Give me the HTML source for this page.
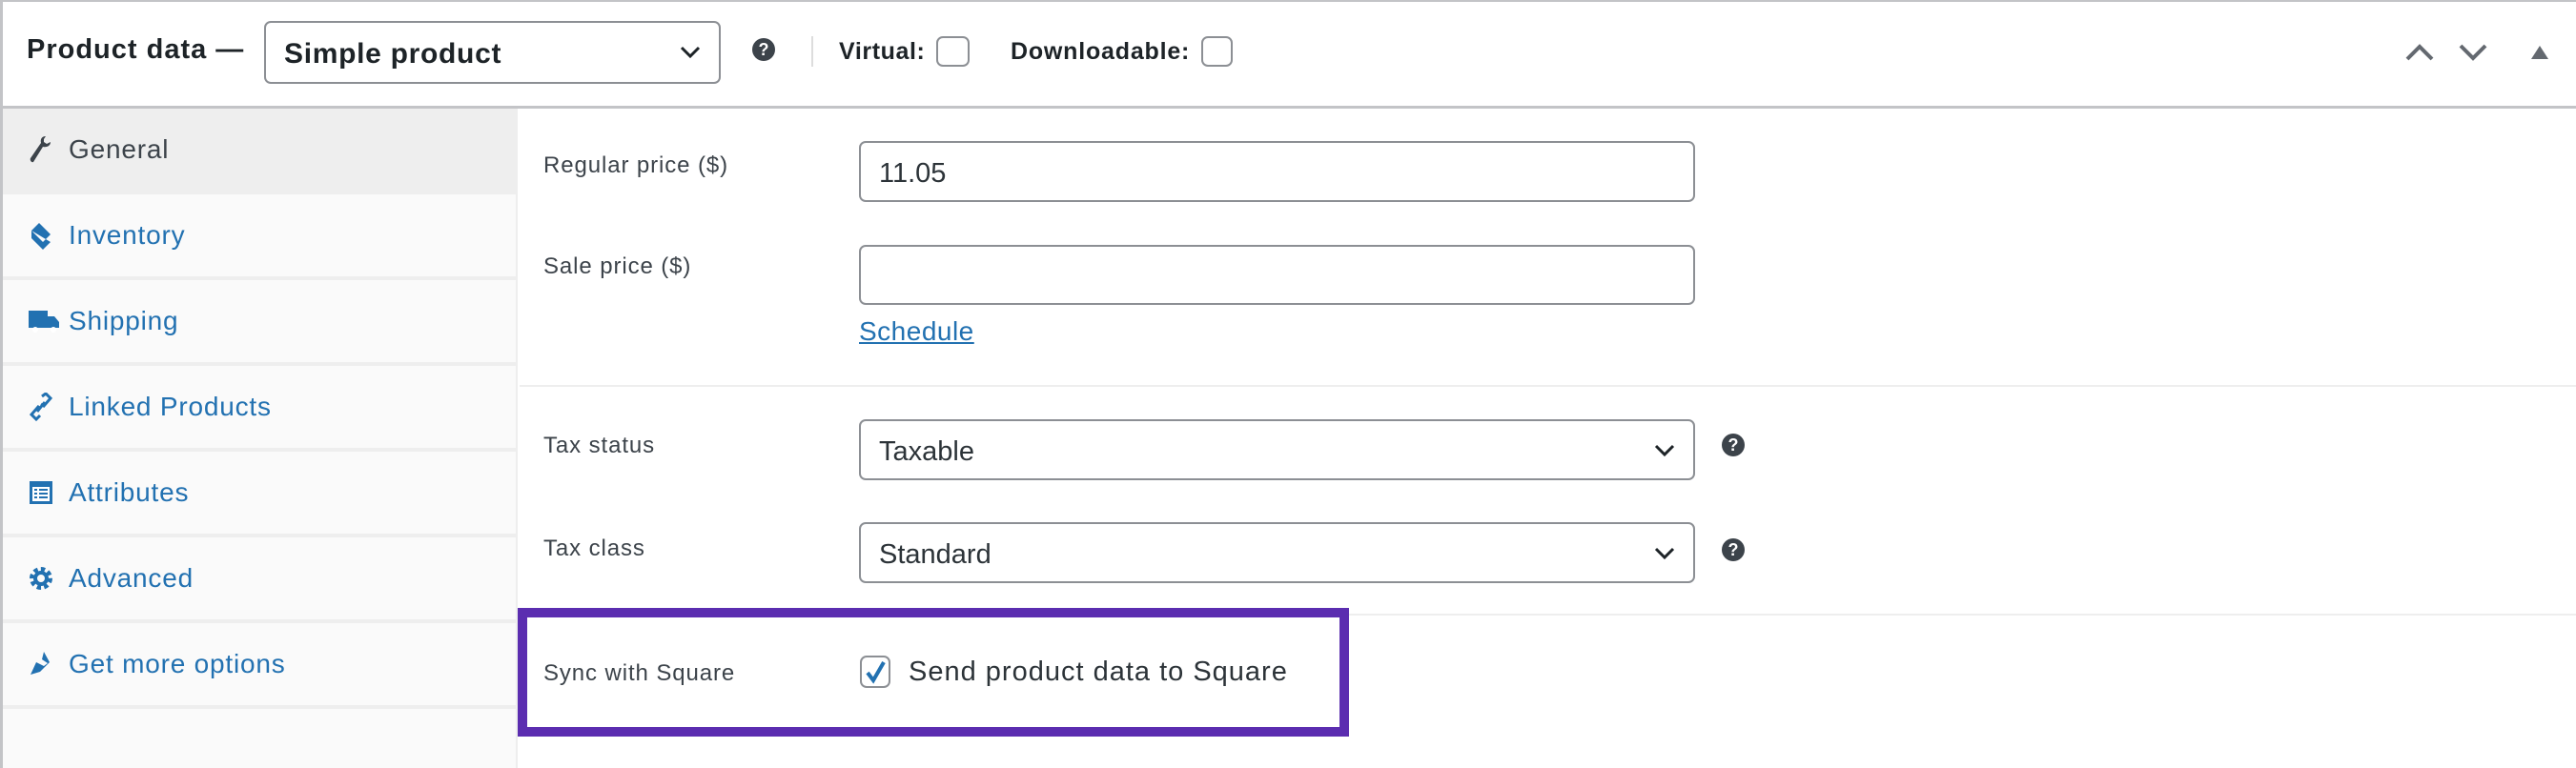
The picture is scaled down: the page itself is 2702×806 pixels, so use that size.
<!DOCTYPE html>
<html><head><meta charset="utf-8"><style>
*{box-sizing:border-box;margin:0;padding:0}
body{width:2702px;height:806px;background:#fff;font-family:"Liberation Sans",sans-serif;position:relative;overflow:hidden;color:#1d2327}
.a{position:absolute}
.hdr{left:0;top:0;width:2702px;height:114px;border-top:2px solid #c3c4c7;border-left:3px solid #c3c4c7;border-bottom:3px solid #c3c4c7}
.side{left:0;top:114px;width:543px;height:692px;background:#fafafa;border-left:3px solid #c3c4c7;border-right:2px solid #eee}
.item{position:absolute;left:3px;width:538px;height:90px;border-bottom:4px solid #eee;font-size:28px;letter-spacing:0.8px;color:#2271b1}
.item span{position:absolute;left:69px;top:27px}
.item svg{position:absolute;left:27px;top:28px}
.lbl{font-size:24px;letter-spacing:0.9px;color:#3c434a}
.inp{border:2px solid #8c8f94;border-radius:7px;background:#fff;font-size:29px;color:#2c3338}
.sep{left:545px;width:2157px;height:2px;background:#eee}
.help{width:24px;height:24px;border-radius:50%;background:#3c434a;color:#fff;font-size:18px;font-weight:bold;text-align:center;line-height:24px}
.cb{border:2px solid #8c8f94;border-radius:7px;background:#fff}
</style></head><body>
<div class="a hdr"></div>
<div class="a" style="left:28px;top:36px;font-size:29px;letter-spacing:1px;font-weight:bold">Product data —</div>
<div class="a inp" style="left:277px;top:22px;width:479px;height:66px;font-weight:bold;font-size:30px;letter-spacing:0.7px;color:#1d2327"><span class="a" style="left:19px;top:16px">Simple product</span>
<svg class="a" style="left:434px;top:24px" width="22" height="14" viewBox="0 0 22 14"><path d="M2 2l9 9 9-9" fill="none" stroke="#1d2327" stroke-width="3"/></svg></div>
<div class="a help" style="left:789px;top:40px">?</div>
<div class="a" style="left:851px;top:38px;width:2px;height:32px;background:#ddd"></div>
<div class="a" style="left:880px;top:40px;font-size:25px;letter-spacing:0.6px;font-weight:bold">Virtual:</div>
<div class="a cb" style="left:982px;top:38px;width:35px;height:32px"></div>
<div class="a" style="left:1060px;top:40px;font-size:25px;letter-spacing:0.8px;font-weight:bold">Downloadable:</div>
<div class="a cb" style="left:1260px;top:38px;width:33px;height:32px"></div>
<svg class="a" style="left:2522px;top:44px" width="32" height="22" viewBox="0 0 32 22"><path d="M3 18L16 5l13 13" fill="none" stroke="#646970" stroke-width="4"/></svg>
<svg class="a" style="left:2578px;top:44px" width="32" height="22" viewBox="0 0 32 22"><path d="M3 4l13 13L29 4" fill="none" stroke="#646970" stroke-width="4"/></svg>
<svg class="a" style="left:2654px;top:47px" width="20" height="16" viewBox="0 0 20 16"><path d="M10 1L19 15H1z" fill="#646970"/></svg>

<div class="a side"></div>
<div class="item" style="top:114px;background:#eee;color:#3c434a;border-bottom:none"><svg width="26" height="30" viewBox="0 0 26 30"><path d="M18 1c-4 0-6 3-5 7L2 24c-1 2 1 5 3 4L15 12c4 1 8-1 8-5l-4 2-3-2V4z" fill="#3c434a"/></svg><span>General</span></div>
<div class="item" style="top:204px"><svg width="26" height="30" viewBox="0 0 26 30"><path d="M3 10L11 2l12 12-8 8z M3 10v8l12 12 8-8" fill="#2271b1"/></svg><span>Inventory</span></div>
<div class="item" style="top:294px"><svg width="34" height="30" viewBox="0 0 34 30"><path d="M0 4h20v18H0z M20 10h7l5 6v6H20z" fill="#2271b1"/><circle cx="7" cy="24" r="3" fill="#fff"/><circle cx="26" cy="24" r="3" fill="#fff"/></svg><span>Shipping</span></div>
<div class="item" style="top:384px"><svg width="26" height="30" viewBox="0 0 26 30"><path d="M14 4l4-3 5 5-7 8-3-2 M12 24l-4 4-5-5 7-8 3 2 M9 20l8-10" fill="none" stroke="#2271b1" stroke-width="3"/></svg><span>Linked Products</span></div>
<div class="item" style="top:474px"><svg width="26" height="30" viewBox="0 0 26 30"><rect x="1" y="3" width="24" height="24" fill="#2271b1"/><rect x="4" y="9" width="18" height="15" fill="#fff"/><path d="M6 12h3M11 12h9M6 16h3M11 16h9M6 20h3M11 20h9" stroke="#2271b1" stroke-width="2"/></svg><span>Attributes</span></div>
<div class="item" style="top:564px"><svg width="26" height="30" viewBox="0 0 26 30"><circle cx="13" cy="15" r="9" fill="none" stroke="#2271b1" stroke-width="6" stroke-dasharray="4 3"/><circle cx="13" cy="15" r="6" fill="none" stroke="#2271b1" stroke-width="4"/></svg><span>Advanced</span></div>
<div class="item" style="top:654px"><svg width="26" height="30" viewBox="0 0 26 30"><path d="M16 2l-2 8 6 4-4 3-8-4-6 13 10-3 10-10z" fill="#2271b1"/></svg><span>Get more options</span></div>

<div class="a lbl" style="left:570px;top:160px">Regular price ($)</div>
<div class="a inp" style="left:901px;top:148px;width:877px;height:64px"><span class="a" style="left:19px;top:16px">11.05</span></div>
<div class="a lbl" style="left:570px;top:266px">Sale price ($)</div>
<div class="a inp" style="left:901px;top:257px;width:877px;height:63px"></div>
<div class="a" style="left:901px;top:332px;font-size:28px;letter-spacing:0.5px;color:#2271b1;text-decoration:underline">Schedule</div>
<div class="a sep" style="top:404px"></div>
<div class="a lbl" style="left:570px;top:454px">Tax status</div>
<div class="a inp" style="left:901px;top:440px;width:877px;height:64px"><span class="a" style="left:19px;top:16px">Taxable</span><svg class="a" style="left:832px;top:24px" width="22" height="14" viewBox="0 0 22 14"><path d="M2 2l9 9 9-9" fill="none" stroke="#1d2327" stroke-width="3"/></svg></div>
<div class="a help" style="left:1806px;top:455px">?</div>
<div class="a lbl" style="left:570px;top:562px">Tax class</div>
<div class="a inp" style="left:901px;top:548px;width:877px;height:64px"><span class="a" style="left:19px;top:16px">Standard</span><svg class="a" style="left:832px;top:24px" width="22" height="14" viewBox="0 0 22 14"><path d="M2 2l9 9 9-9" fill="none" stroke="#1d2327" stroke-width="3"/></svg></div>
<div class="a help" style="left:1806px;top:565px">?</div>
<div class="a sep" style="top:644px"></div>
<div class="a" style="left:543px;top:638px;width:872px;height:135px;border:10px solid #5b2db0;background:#fff"></div>
<div class="a lbl" style="left:570px;top:693px">Sync with Square</div>
<div class="a cb" style="left:902px;top:688px;width:32px;height:34px"><svg class="a" style="left:3px;top:3px" width="24" height="26" viewBox="0 0 24 26"><path d="M3 13l6 8L20 2" fill="none" stroke="#2271b1" stroke-width="4"/></svg></div>
<div class="a" style="left:953px;top:689px;font-size:29px;letter-spacing:1px;color:#2c3338">Send product data to Square</div>
</body></html>
